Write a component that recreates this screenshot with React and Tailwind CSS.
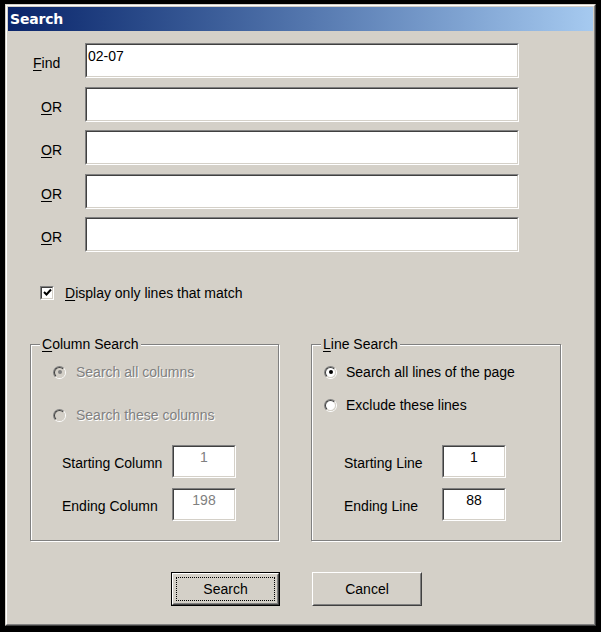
import React from "react";

const FONT = "[font-family:'Liberation_Sans',Arial,sans-serif]";

function Sunken({ className = "", innerClass = "", children }) {
  return (
    <div className={`border border-t-[#808080] border-l-[#808080] border-r-white border-b-white ${className}`}>
      <div className={`h-full border border-t-[#404040] border-l-[#404040] border-r-[#d4d0c8] border-b-[#d4d0c8] bg-white ${innerClass}`}>
        {children}
      </div>
    </div>
  );
}

function Radio({ checked, disabled }) {
  return (
    <div className="w-[13px] h-[13px] rounded-full border border-t-[#808080] border-l-[#808080] border-r-white border-b-white shrink-0">
      <div className={`w-full h-full rounded-full border border-t-[#404040] border-l-[#404040] border-r-[#d4d0c8] border-b-[#d4d0c8] flex items-center justify-center ${disabled ? "bg-[#d4d0c8]" : "bg-white"}`}>
        {checked && <div className={`w-[4px] h-[4px] rounded-full ${disabled ? "bg-[#808080]" : "bg-black"}`} />}
      </div>
    </div>
  );
}

function Checkbox() {
  return (
    <div className="w-[14px] h-[14px] border border-t-[#808080] border-l-[#808080] border-r-white border-b-white shrink-0">
      <div className="w-full h-full border border-t-[#404040] border-l-[#404040] border-r-[#d4d0c8] border-b-[#d4d0c8] bg-white flex items-center justify-center">
        <svg width="9" height="9" viewBox="0 0 9 9">
          <path d="M1 4 L3.5 6.5 L8 1.5" fill="none" stroke="#000" strokeWidth="2" />
        </svg>
      </div>
    </div>
  );
}

function U({ children }) {
  return <span className="underline underline-offset-[2px] decoration-1">{children}</span>;
}

function InputRow({ label, pl, value }) {
  return (
    <div className="flex h-[35px]">
      <div className={`w-[77px] h-full flex items-center pt-[5px] ${pl}`}>{label}</div>
      <Sunken className="w-[434px] h-[35px]" innerClass="px-[1px] pt-[3px] leading-[16px]">
        {value}
      </Sunken>
    </div>
  );
}

function Button({ children, isDefault, w }) {
  const raised = (
    <div className="h-full border border-t-white border-l-white border-r-[#404040] border-b-[#404040]">
      <div className="h-full border border-t-[#d4d0c8] border-l-[#d4d0c8] border-r-[#808080] border-b-[#808080] bg-[#d4d0c8] flex items-center justify-center p-[2px]">
        {isDefault ? (
          <div className="w-full h-full border border-dotted border-black flex items-center justify-center">{children}</div>
        ) : (
          children
        )}
      </div>
    </div>
  );
  return (
    <div className={`${w} h-[34px] ${isDefault ? "border border-black" : ""}`}>{raised}</div>
  );
}

const disabledText = "text-[#808080] [text-shadow:1px_1px_0_#ffffff]";

export default function App() {
  return (
    <div className={`w-[601px] h-[632px] bg-black pt-[4px] pl-[5px] pr-[5px] pb-[6px] ${FONT} text-[14px] leading-[16px] text-black`}>
      <div className="h-full border border-t-[#d4d0c8] border-l-[#d4d0c8] border-r-[#404040] border-b-[#404040]">
        <div className="h-full border border-t-white border-l-white border-r-[#808080] border-b-[#808080] p-[1px] bg-[#d4d0c8] flex flex-col">
          {/* Title bar */}
          <div className="h-[24px] bg-gradient-to-r from-[#0a246a] to-[#a6caf0] flex items-center pl-[2px] shrink-0">
            <span className="text-white font-bold text-[14px] [font-family:'DejaVu_Sans',Verdana,sans-serif] tracking-[-0.2px]">Search</span>
          </div>

          {/* Body */}
          <div className="flex-1 flex flex-col pt-[12px]">
            <div className="flex flex-col gap-[8.5px]">
              <InputRow label={<span><U>F</U>ind</span>} pl="pl-[25px]" value="02-07" />
              <InputRow label={<span><U>O</U>R</span>} pl="pl-[33px]" />
              <InputRow label={<span><U>O</U>R</span>} pl="pl-[33px]" />
              <InputRow label={<span><U>O</U>R</span>} pl="pl-[33px]" />
              <InputRow label={<span><U>O</U>R</span>} pl="pl-[33px]" />
            </div>

            <div className="flex items-center gap-[11px] ml-[32px] mt-[32px] h-[17px]">
              <Checkbox />
              <span><U>D</U>isplay only lines that match</span>
            </div>

            <div className="flex ml-[22px] mt-[35px] gap-[32px]">
              {/* Column Search */}
              <fieldset className="w-[249px] border border-[#808080] shadow-[inset_1px_1px_0_#ffffff,1px_1px_0_#ffffff]">
                <legend className="ml-[9px] px-[2px] leading-[16px] bg-[#d4d0c8]">
                  <U>C</U>olumn Search
                </legend>
                <div className="flex flex-col pb-[19px]">
                  <div className="flex items-center h-[18px] mt-[11px] pl-[22px] gap-[10px]">
                    <Radio checked disabled />
                    <span className={disabledText}>Search all columns</span>
                  </div>
                  <div className="flex items-center h-[18px] mt-[25px] pl-[22px] gap-[10px]">
                    <Radio disabled />
                    <span className={disabledText}>Search these columns</span>
                  </div>
                  <div className="flex items-center h-[33px] mt-[21px] pl-[31px]">
                    <span className="w-[110px] pt-[3px]">Starting Column</span>
                    <Sunken className="w-[64px] h-[33px]" innerClass="text-center text-[#808080] pt-[2px]">1</Sunken>
                  </div>
                  <div className="flex items-center h-[33px] mt-[10px] pl-[31px]">
                    <span className="w-[110px] pt-[3px]">Ending Column</span>
                    <Sunken className="w-[64px] h-[33px]" innerClass="text-center text-[#808080] pt-[2px]">198</Sunken>
                  </div>
                </div>
              </fieldset>

              {/* Line Search */}
              <fieldset className="w-[250px] border border-[#808080] shadow-[inset_1px_1px_0_#ffffff,1px_1px_0_#ffffff]">
                <legend className="ml-[9px] px-[2px] leading-[16px] bg-[#d4d0c8]">
                  <U>L</U>ine Search
                </legend>
                <div className="flex flex-col pb-[19px]">
                  <div className="flex items-center h-[18px] mt-[11px] pl-[12px] gap-[9px]">
                    <Radio checked />
                    <span>Search all lines of the page</span>
                  </div>
                  <div className="flex items-center h-[18px] mt-[15px] pl-[12px] gap-[9px]">
                    <Radio />
                    <span>Exclude these lines</span>
                  </div>
                  <div className="flex items-center h-[33px] mt-[31px] pl-[32px]">
                    <span className="w-[98px] pt-[3px]">Starting Line</span>
                    <Sunken className="w-[64px] h-[33px]" innerClass="text-center pt-[2px]">1</Sunken>
                  </div>
                  <div className="flex items-center h-[33px] mt-[10px] pl-[32px]">
                    <span className="w-[98px] pt-[3px]">Ending Line</span>
                    <Sunken className="w-[64px] h-[33px]" innerClass="text-center pt-[2px]">88</Sunken>
                  </div>
                </div>
              </fieldset>
            </div>

            <div className="flex ml-[163px] mt-[31px] gap-[32px]">
              <Button isDefault w="w-[109px]">Search</Button>
              <Button w="w-[110px]">Cancel</Button>
            </div>
          </div>
        </div>
      </div>
    </div>
  );
}
